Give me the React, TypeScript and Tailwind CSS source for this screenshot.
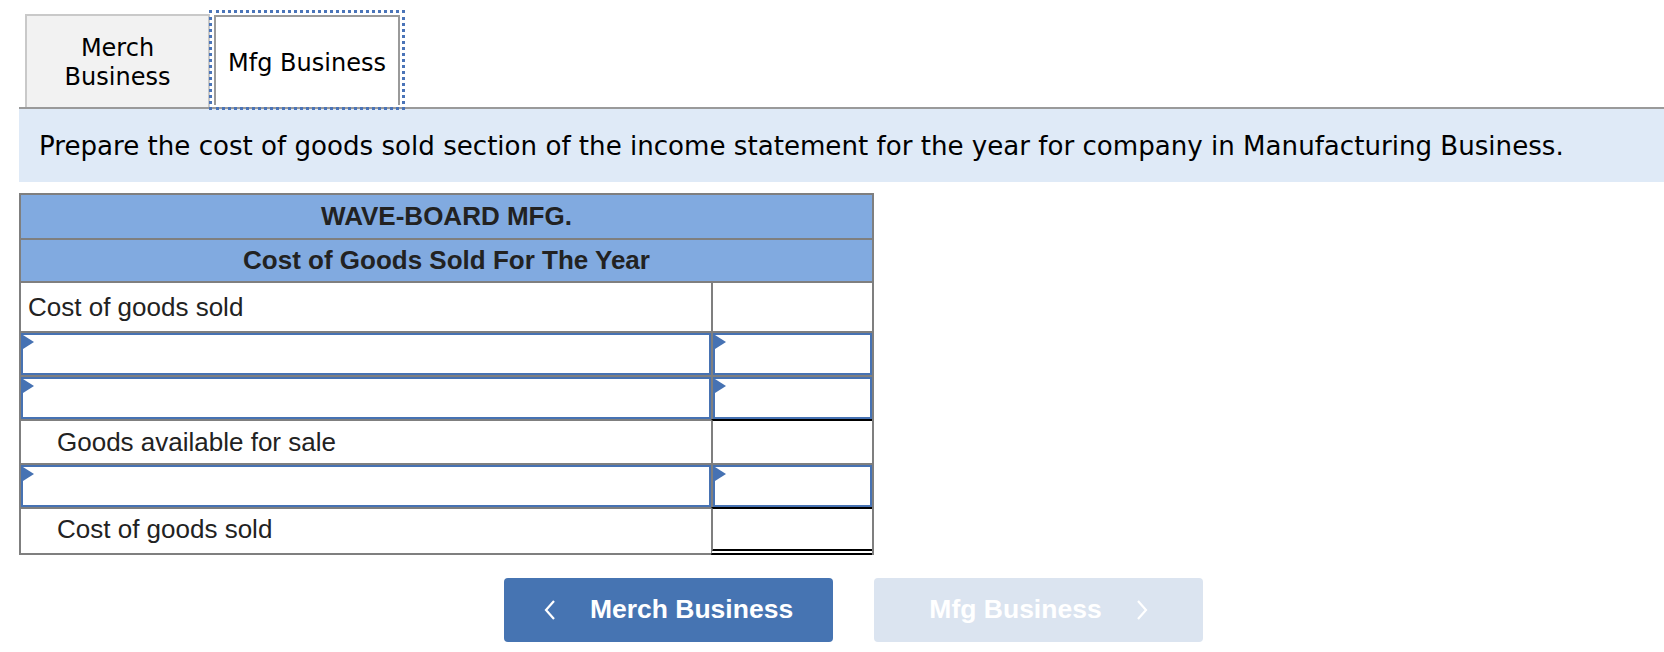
import React from 'react';

const verdana = { fontFamily: '"DejaVu Sans", Verdana, sans-serif' };

function Caret() {
  return (
    <svg className="absolute left-0 top-0" width="11" height="14" viewBox="0 0 11 14">
      <polygon points="0,0 11,7 0,14" fill="#4672b3" />
    </svg>
  );
}

function InputCell() {
  return (
    <div className="relative h-full border-2 border-[#4672b3] bg-white">
      <Caret />
    </div>
  );
}

type Row =
  | { kind: 'label'; text: string; indent?: boolean; rightTop?: 'gray' | 'black'; last?: boolean; height: string }
  | { kind: 'input' };

const rows: Row[] = [
  { kind: 'label', text: 'Cost of goods sold', height: 'h-[50px]' },
  { kind: 'input' },
  { kind: 'input' },
  { kind: 'label', text: 'Goods available for sale', indent: true, rightTop: 'black', height: 'h-[44px]' },
  { kind: 'input' },
  { kind: 'label', text: 'Cost of goods sold', indent: true, rightTop: 'black', last: true, height: 'h-[48px]' },
];

export default function App() {
  return (
    <div className="w-[1664px] h-[652px] bg-white overflow-hidden" style={verdana}>
      {/* tabs */}
      <div className="ml-[19px] mt-[14px] flex items-end border-b-2 border-[#9a9a9a] pl-[6px]">
        <div className="w-[185px] h-[93px] border-2 border-b-0 border-[#c9c9c9] bg-[#f2f2f2] flex items-center justify-center text-center text-[24px] leading-[29px] text-black pt-[3px]">
          Merch
          <br />
          Business
        </div>
        <div className="relative z-10 ml-[4px] mb-[2px] w-[186px] h-[90px] border-2 border-b-0 border-[#9a9a9a] bg-white flex items-center justify-center pt-[4px] text-[24px] text-black outline-[3px] outline-dotted outline-[#4a74b8] outline-offset-[2px]">
          Mfg Business
        </div>
      </div>

      {/* prompt */}
      <div className="ml-[19px] h-[73px] bg-[#dfeaf7] flex items-center pl-[20px] pt-[2px] text-[26.1px] text-black">
        Prepare the cost of goods sold section of the income statement for the year for company in Manufacturing Business.
      </div>

      {/* statement */}
      <div
        className="ml-[19px] mt-[11px] w-[855px] border-2 border-b-0 border-[#7f7f7f] text-[#222]"
        style={{ fontFamily: '"Liberation Sans", Arial, sans-serif' }}
      >
        <div className="h-[43px] bg-[#81aae0] flex items-center justify-center text-[26px] font-bold">
          WAVE-BOARD MFG.
        </div>
        <div className="h-[43px] border-t-2 border-[#7f7f7f] bg-[#81aae0] flex items-center justify-center text-[26px] font-bold">
          Cost of Goods Sold For The Year
        </div>
        {rows.map((row, i) =>
          row.kind === 'input' ? (
            <div key={i} className="flex h-[44px]">
              <div className="w-[690px] border-t-2 border-[#7f7f7f]">
                <InputCell />
              </div>
              <div className="flex-1 border-t-2 border-l-2 border-[#7f7f7f]">
                <InputCell />
              </div>
            </div>
          ) : (
            <div key={i} className={`flex ${row.height}`}>
              <div
                className={`w-[690px] border-t-2 border-[#7f7f7f] flex items-center text-[26px] ${
                  row.indent ? 'pl-[36px]' : 'pl-[7px]'
                } ${row.last ? 'border-b-2 pb-[4px]' : ''}`}
              >
                {row.text}
              </div>
              <div
                className={`flex-1 border-l-2 border-l-[#7f7f7f] border-t-2 ${
                  row.rightTop === 'black' ? 'border-t-black' : 'border-t-[#7f7f7f]'
                } ${row.last ? 'border-b-[6px] border-double border-b-black' : ''}`}
              />
            </div>
          )
        )}
      </div>

      {/* navigation */}
      <div className="mt-[23px] ml-[504px] flex gap-[41px]" style={{ fontFamily: '"Liberation Sans", Arial, sans-serif' }}>
        <button className="w-[329px] h-[64px] rounded-[4px] bg-[#4674b2] text-white text-[26.5px] font-bold flex items-center justify-center gap-[34px]">
          <svg width="12" height="22" viewBox="0 0 12 22" fill="none">
            <polyline points="10,2 2,11 10,20" stroke="white" strokeWidth="2.2" />
          </svg>
          Merch Business
        </button>
        <button className="w-[329px] h-[64px] rounded-[4px] bg-[#dbe4f0] text-white text-[26.5px] font-bold flex items-center justify-center gap-[34px]">
          Mfg Business
          <svg width="12" height="22" viewBox="0 0 12 22" fill="none">
            <polyline points="2,2 10,11 2,20" stroke="white" strokeWidth="2.2" />
          </svg>
        </button>
      </div>
    </div>
  );
}
